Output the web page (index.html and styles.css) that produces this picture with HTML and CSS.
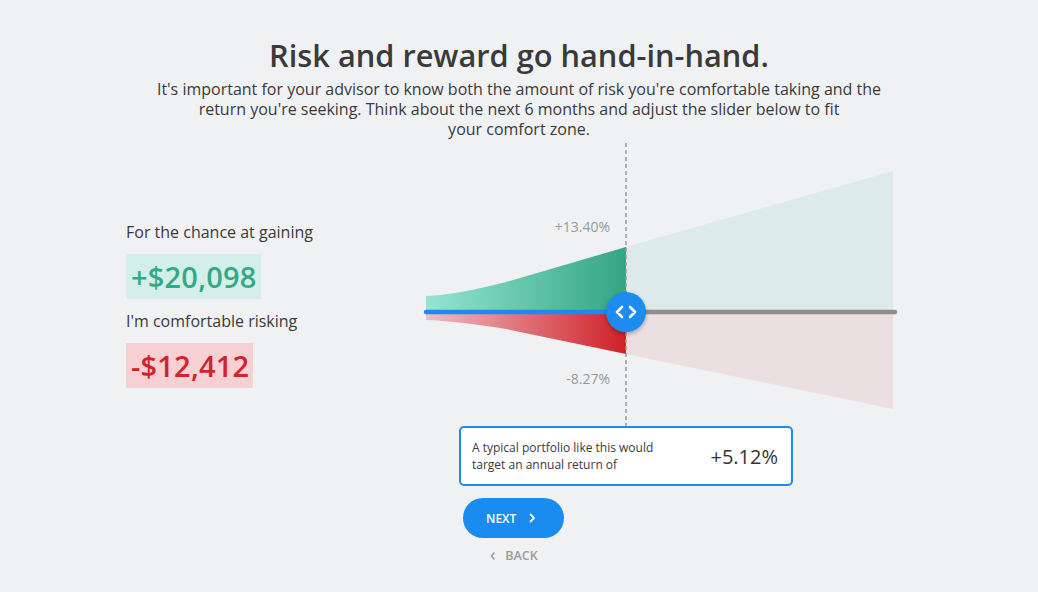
FILE: index.html
```html
<!DOCTYPE html>
<html lang="en">
<head>
<meta charset="utf-8">
<title>Risk and reward</title>
<link rel="stylesheet" href="styles.css">
</head>
<body>
<div class="page">
  <header class="intro">
    <h1 class="title">Risk and reward go hand-in-hand.</h1>
    <p class="lead">It's important for your advisor to know both the amount of risk you're comfortable taking and the<br>return you're seeking. Think about the next 6 months and adjust the slider below to fit<br>your comfort zone.</p>
  </header>
  <section class="main">
    <div class="summary">
      <div class="label">For the chance at gaining</div>
      <div class="amount gain">+$20,098</div>
      <div class="label">I'm comfortable risking</div>
      <div class="amount loss">-$12,412</div>
    </div>
    <div class="chart-col">
      <svg class="chart" width="490" height="283" viewBox="0 0 490 283">
        <defs>
          <linearGradient id="gGreen" x1="0" x2="1" y1="0" y2="0">
            <stop offset="0" stop-color="#94e5d2"/>
            <stop offset="1" stop-color="#34a582"/>
          </linearGradient>
          <linearGradient id="gRed" x1="0" x2="1" y1="0" y2="0">
            <stop offset="0" stop-color="#efbcc3"/>
            <stop offset="1" stop-color="#cf2127"/>
          </linearGradient>
          <filter id="sh" x="-50%" y="-50%" width="200%" height="200%">
            <feDropShadow dx="0" dy="2" stdDeviation="2" flood-color="#000" flood-opacity="0.3"/>
          </filter>
        </defs>
        <path d="M210,104 L477,28 L477,169 L210,169 Z" fill="#dcebea"/>
        <path d="M210,211 L477,266 L477,169 L210,169 Z" fill="#ebdfe1"/>
        <path d="M10,169 L10,153 Q40,152 90,139 L210,104 L210,169 Z" fill="url(#gGreen)"/>
        <path d="M10,169 L10,177 Q40,178 90,186 L210,211 L210,169 Z" fill="url(#gRed)"/>
        <line x1="210" y1="0" x2="210" y2="283" stroke="#9a9a9a" stroke-width="1.5" stroke-dasharray="4 3"/>
        <line x1="210" y1="169" x2="479" y2="169" stroke="#8e8e8e" stroke-width="4.5" stroke-linecap="round"/>
        <line x1="10" y1="169" x2="210" y2="169" stroke="#1a8cf0" stroke-width="4.5" stroke-linecap="round"/>
        <text class="pct" x="194" y="89" text-anchor="end">+13.40%</text>
        <text class="pct" x="194" y="241" text-anchor="end">-8.27%</text>
        <circle cx="210" cy="169" r="20" fill="#1a8cf0" filter="url(#sh)"/>
        <path d="M206,164 L201,169 L206,174 M214,164 L219,169 L214,174" fill="none" stroke="#fff" stroke-width="2.6" stroke-linecap="round" stroke-linejoin="round"/>
      </svg>
      <div class="target">
        <div class="target-text">A typical portfolio like this would<br>target an annual return of</div>
        <div class="target-value">+5.12%</div>
      </div>
      <div class="actions">
        <button class="btn-next">NEXT
          <svg width="10" height="10" viewBox="0 0 10 10"><path d="M3.5,1.5 L7,5 L3.5,8.5" fill="none" stroke="#fff" stroke-width="1.8" stroke-linecap="round" stroke-linejoin="round"/></svg>
        </button>
        <div class="back">
          <svg width="8" height="10" viewBox="0 0 8 10"><path d="M5,2 L2.5,5 L5,8" fill="none" stroke="#9a9a9a" stroke-width="1.5" stroke-linecap="round" stroke-linejoin="round"/></svg>
          <span>BACK</span>
        </div>
      </div>
    </div>
  </section>
</div>
</body>
</html>
```
FILE: styles.css
```css
* { box-sizing: border-box; }
html, body { margin: 0; padding: 0; }
body {
  background: #f0f1f3;
  font-family: "Open Sans", "Liberation Sans", sans-serif;
  color: #3a3a3a;
  width: 1038px;
  height: 592px;
  overflow: hidden;
}
.intro {
  text-align: center;
  padding-top: 37px;
}
.title {
  margin: 0;
  font-size: 30.75px;
  line-height: 36px;
  font-weight: 600;
  color: #3a3a3a;
}
.lead {
  margin: 6px 0 0;
  font-size: 16px;
  line-height: 20px;
  color: #3a3a3a;
}
.main {
  display: flex;
  margin-top: 4px;
}
.summary {
  width: 416px;
  padding-left: 126px;
  padding-top: 78px;
  display: flex;
  flex-direction: column;
  align-items: flex-start;
}
.label {
  font-size: 16px;
  line-height: 22px;
  color: #3a3a3a;
}
.amount {
  margin: 11px 0 11px;
  height: 45px;
  line-height: 45px;
  padding: 0 4px 0 5px;
  font-size: 29px;
  font-weight: 600;
  letter-spacing: 0.2px;
}
.gain { background: #d4efe8; color: #35a987; }
.loss { background: #f6d0d2; color: #d2232a; }
.chart-col {
  width: 490px;
  display: flex;
  flex-direction: column;
  align-items: flex-start;
}
.chart { display: block; }
.pct {
  font-family: "Open Sans", "Liberation Sans", sans-serif;
  font-size: 14px;
  fill: #999;
}
.target {
  margin-left: 43px;
  width: 334px;
  height: 60px;
  background: #fff;
  border: 2px solid #1a8cf0;
  border-radius: 5px;
  display: flex;
  align-items: center;
  justify-content: space-between;
  padding: 0 13px 0 11px;
}
.target-text {
  font-size: 12px;
  line-height: 17px;
  color: #3a3a3a;
}
.target-value {
  font-size: 20px;
  font-weight: 500;
  color: #333;
}
.actions {
  margin-left: 47px;
  margin-top: 12px;
  display: flex;
  flex-direction: column;
  align-items: center;
}
.btn-next {
  width: 101px;
  height: 40px;
  border: 0;
  border-radius: 20px;
  background: #1a8cf0;
  color: #fff;
  font-family: "Open Sans", "Liberation Sans", sans-serif;
  font-size: 12px;
  font-weight: 600;
  display: flex;
  align-items: center;
  justify-content: flex-start;
  gap: 11px;
  padding: 0 0 0 23px;
}
.back {
  margin-top: 10px;
  display: flex;
  align-items: center;
  gap: 8px;
  font-size: 12.5px;
  line-height: 16px;
  font-weight: 600;
  color: #9a9a9a;
}
```
